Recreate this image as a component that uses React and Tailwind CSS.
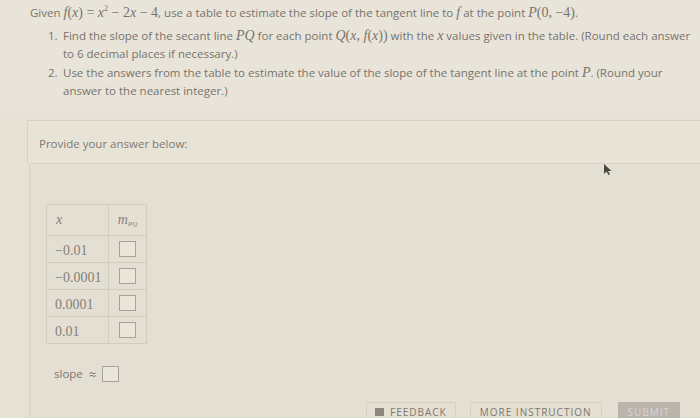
import React from "react";

const M = ({ children, i = true }) => (
  <span className={`font-['Liberation_Serif',serif] text-[14px] ${i ? "italic" : ""}`}>{children}</span>
);

function Box() {
  return <div className="w-[17px] h-[16px] border border-[#a8a39a] bg-[#ebe6da]" />;
}

export default function App() {
  const rows = ["\u22120.01", "\u22120.0001", "0.0001", "0.01"];
  return (
    <div className="w-[700px] h-[418px] overflow-hidden bg-[#e6e1d5] font-['Open_Sans',sans-serif] text-[11.5px] text-[#78736c] leading-[18px] relative">
      <div className="pl-[30px] pt-[3px] bg-[#e9e4d9]">
        <div className="h-[20px] flex items-center whitespace-pre">
          Given <M>f</M><M i={false}>(</M><M>x</M><M i={false}>{") = "}</M><M>x</M><sup className="text-[8px] font-['Liberation_Serif',serif]">2</sup><M i={false}>{" \u2212 2"}</M><M>x</M><M i={false}>{" \u2212 4"}</M>, use a table to estimate the slope of the tangent line to <M>f</M> at the point <M>P</M><M i={false}>(0, &minus;4)</M>.
        </div>
        <ol className="mt-[4px] pl-[18px] pr-[4px] flex flex-col gap-[1px]">
          <li className="flex">
            <span className="w-[15px] shrink-0">1.</span>
            <span className="leading-[18px]">
              Find the slope of the secant line <M>PQ</M> for each point <M>Q</M><M i={false}>(</M><M>x</M><M i={false}>, </M><M>f</M><M i={false}>(</M><M>x</M><M i={false}>))</M> with the <M>x</M> values given in the table. (Round each answer to 6 decimal places if necessary.)
            </span>
          </li>
          <li className="flex">
            <span className="w-[15px] shrink-0">2.</span>
            <span className="pr-[30px]">
              Use the answers from the table to estimate the value of the slope of the tangent line at the point <M>P</M>. (Round your answer to the nearest integer.)
            </span>
          </li>
        </ol>
        <div className="h-[13px]" />
      </div>
      <div className="ml-[27px] mt-[7px] border-t border-l border-[#d7d1c4] bg-[#e8e3d7] h-[43px] flex items-center pl-[11px] pt-[4px] text-[#807a72]">
        Provide your answer below:
      </div>
      <div className="ml-[29px] border-t border-l border-[#d8d2c5] h-[300px] bg-[#e4dfd3] pl-[16px] pt-[40px]">
        <table className="border-collapse border border-[#d3cdbf] text-[#858078]">
          <thead>
            <tr className="h-[31px]">
              <th className="w-[62px] border border-[#d3cdbf] text-left pl-[9px] font-normal"><M>x</M></th>
              <th className="w-[38px] border border-[#d3cdbf] font-normal">
                <M>m</M><sub className="text-[7px] font-['Liberation_Serif',serif] italic">PQ</sub>
              </th>
            </tr>
          </thead>
          <tbody>
            {rows.map((r) => (
              <tr key={r} className="h-[27px]">
                <td className="border border-[#d3cdbf] pl-[8px] pt-[3px]"><M i={false}>{r}</M></td>
                <td className="border border-[#d3cdbf]"><div className="flex justify-center"><Box /></div></td>
              </tr>
            ))}
          </tbody>
        </table>
        <div className="mt-[21px] ml-[8px] flex items-center text-[#7c766e]">
          <span>slope</span><span className="text-[13px] ml-[6px] mr-[6px]">&asymp;</span><Box />
        </div>
      </div>
      <svg className="absolute left-[603px] top-[163px]" width="9" height="13" viewBox="0 0 9 13">
        <path d="M1 1 L1 11 L3.5 8.5 L5.5 12 L7 11.2 L5 8 L8.5 8 Z" fill="#4a4640" />
      </svg>
      <div className="absolute left-0 right-0 top-[402px] flex items-center pl-[366px] text-[10px] tracking-[1px] text-[#7d776f]">
        <div className="h-[20px] border border-[#d6d0c3] px-[8px] flex items-center gap-[6px]">
          <span className="w-[9px] h-[8px] bg-[#8b877f] inline-block" />FEEDBACK
        </div>
        <div className="h-[20px] ml-[14px] border border-[#d6d0c3] px-[9px] flex items-center">MORE INSTRUCTION</div>
        <div className="h-[20px] ml-[16px] bg-[#b9b4ac] text-[#d9d4cc] px-[10px] flex items-center">SUBMIT</div>
      </div>
    </div>
  );
}
